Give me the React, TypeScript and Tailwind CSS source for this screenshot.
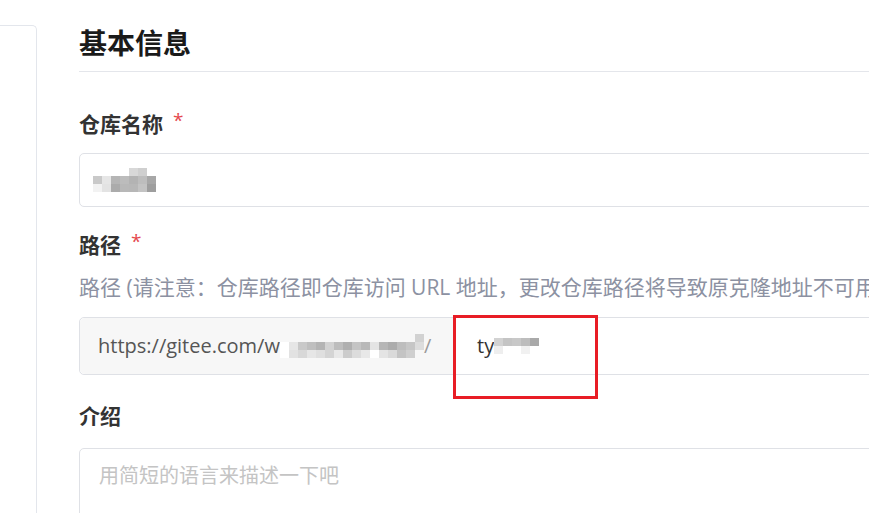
import React from "react";

// mosaic blocks used where the screenshot has pixelated (redacted) text
function Mosaic({ cells }: { cells: string[][] }) {
  return (
    <span className="inline-flex flex-col align-middle">
      {cells.map((row, i) => (
        <span key={i} className="flex">
          {row.map((c, j) => (
            <span key={j} className="h-[8px] w-[9px]" style={{ backgroundColor: c }} />
          ))}
        </span>
      ))}
    </span>
  );
}

const nameCells = [
  ["#ffffff", "#ffffff", "#ffffff", "#ffffff", "#d8d8d8", "#cfcfcf", "#ffffff"],
  ["#c9c9c9", "#e6e6e6", "#b5b5b5", "#bcbcbc", "#b3b3b3", "#bdbdbd", "#a7a7a7"],
  ["#f2f2f2", "#e3e3e3", "#ababab", "#b8b8b8", "#b7b7b7", "#c3c3c3", "#9e9e9e"],
];

const prefixCells = [
  ["#f7f7f7", "#f7f7f7", "#f7f7f7", "#f7f7f7", "#f7f7f7", "#f7f7f7", "#f7f7f7", "#f7f7f7", "#f7f7f7", "#f7f7f7", "#f7f7f7", "#f7f7f7", "#f7f7f7", "#f7f7f7", "#f7f7f7", "#d2d2d2"],
  ["#ffffff", "#e6e6e6", "#c9c9c9", "#bfbfbf", "#b4b4b4", "#d2d2d2", "#bdbdbd", "#afafaf", "#c4c4c4", "#b8b8b8", "#e4e4e4", "#b6b6b6", "#acacac", "#bdbdbd", "#c6c6c6", "#dcdcdc"],
  ["#ffffff", "#e2e2e2", "#d8d8d8", "#e6e6e6", "#dfdfdf", "#d4d4d4", "#e8e8e8", "#cccccc", "#dcdcdc", "#e8e8e8", "#ffffff", "#e4e4e4", "#dadada", "#c4c4c4", "#cfcfcf", "#f7f7f7"],
];

const repoCells = [
  ["#d2d2d2", "#c4c4c4", "#c8c8c8", "#bdbdbd", "#a9a9a9"],
  ["#eeeeee", "#ffffff", "#ffffff", "#f1f1f1", "#ffffff"],
];

function Label({ text, required }: { text: string; required?: boolean }) {
  return (
    <div className="flex items-start text-[21px] font-bold leading-[30px] text-[#333333]">
      <span>{text}</span>
      {required && <span className="ml-[10px] -mt-[4px] text-[19px] font-normal text-[#e5484d]">*</span>}
    </div>
  );
}

export default function App() {
  return (
    <div
      className="relative flex h-[513px] w-[869px] overflow-hidden bg-white"
      style={{ fontFamily: '"Open Sans", "Noto Sans CJK SC", sans-serif' }}
    >
      {/* sidebar card edge */}
      <aside className="w-[37px] shrink-0 pt-[25px]">
        <div className="h-full rounded-tr-[5px] border-t border-r border-[#e3e6ec]" />
      </aside>

      <main className="ml-[42px] w-[900px] shrink-0 pt-[25px]">
        <h2 className="border-b border-[#e4e6eb] pb-[10px] text-[28px] font-bold leading-[36px] text-[#1a1a1a]">
          基本信息
        </h2>

        <div className="mt-[37px]">
          <Label text="仓库名称" required />
          <div className="mt-[14px] flex h-[54px] items-center rounded-[5px] border border-[#dfe1e6] pl-[13px]">
            <Mosaic cells={nameCells} />
          </div>
        </div>

        <div className="mt-[23px]">
          <Label text="路径" required />
          <p className="mt-[12px] whitespace-nowrap text-[21px] leading-[30px] text-[#8c91a2]">
            路径 (请注意：仓库路径即仓库访问 URL 地址，更改仓库路径将导致原克隆地址不可用)
          </p>
          <div className="mt-[15px] flex h-[58px] rounded-[5px] border border-[#dfe1e6]">
            <div className="flex w-[374px] shrink-0 items-center rounded-l-[5px] bg-[#f7f7f7] pl-[18px] text-[20px] text-[#555555]">
              <span>https://gitee.com/w</span>
              <Mosaic cells={prefixCells} />
              <span className="text-[#9a9a9a]">/</span>
            </div>
            <div className="flex items-center pl-[23px] text-[20px] text-[#333333]">
              <span>ty</span>
              <Mosaic cells={repoCells} />
            </div>
          </div>
        </div>

        <div className="mt-[26px]">
          <Label text="介绍" />
          <div className="mt-[17px] h-[120px] rounded-[5px] border border-[#dfe1e6] px-[19px] pt-[12px] text-[20px] leading-[30px] text-[#c4c4c4]">
            用简短的语言来描述一下吧
          </div>
        </div>
      </main>

      {/* red annotation box drawn over the screenshot */}
      <div className="absolute left-[453px] top-[315px] h-[84px] w-[145px] border-[3px] border-[#e81d25]" />
    </div>
  );
}
